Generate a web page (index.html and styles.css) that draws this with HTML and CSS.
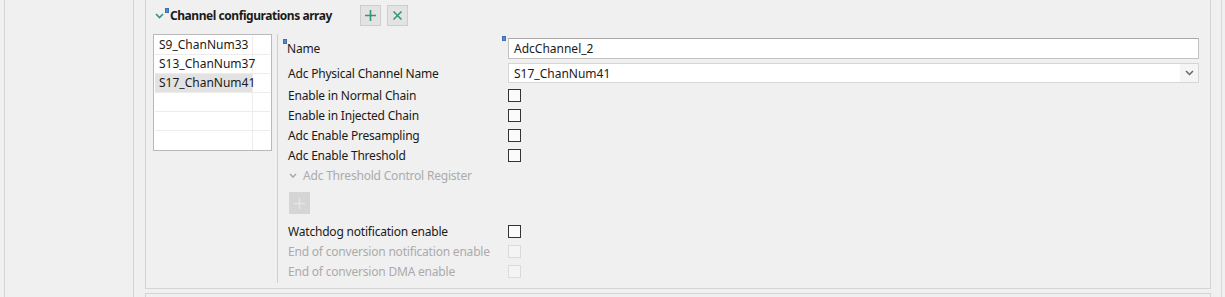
FILE: index.html
```html
<!DOCTYPE html>
<html>
<head>
  <title>Channel configurations</title>
  <link rel="stylesheet" href="styles.css">
</head>
<body>
  <div class="page">
    <!-- left tree area (empty here) -->
    <div class="sidebar"></div>

    <div class="main">
      <div class="panel">
        <!-- section header -->
        <div class="panel-head">
          <span class="twisty"><svg width="9" height="6" viewBox="0 0 9 6"><path d="M1 1 L4.5 4.5 L8 1" fill="none" stroke="#3d8f73" stroke-width="1.6"/></svg></span>
          <span class="mark mark-head"></span>
          <span class="title">Channel configurations array</span>
          <div class="tools">
            <button class="tool"><svg width="13" height="13" viewBox="0 0 13 13"><path d="M6.5 1 V12 M1 6.5 H12" stroke="#2f9a6b" stroke-width="1.6"/></svg></button>
            <button class="tool"><svg width="11" height="11" viewBox="0 0 11 11"><path d="M1.5 1.5 L9.5 9.5 M9.5 1.5 L1.5 9.5" stroke="#2f9a6b" stroke-width="1.6"/></svg></button>
          </div>
        </div>

        <div class="panel-body">
          <!-- list of channels -->
          <div class="list">
            <div class="list-row"><span class="cell">S9_ChanNum33</span><span class="cell-end"></span></div>
            <div class="list-row"><span class="cell">S13_ChanNum37</span><span class="cell-end"></span></div>
            <div class="list-row"><span class="cell selected">S17_ChanNum41</span><span class="cell-end"></span></div>
            <div class="list-row"><span class="cell"></span><span class="cell-end"></span></div>
            <div class="list-row"><span class="cell"></span><span class="cell-end"></span></div>
            <div class="list-row"><span class="cell"></span><span class="cell-end"></span></div>
          </div>

          <!-- properties of the selected channel -->
          <div class="form">
            <div class="row row-tall">
              <div class="label"><span class="mark"></span>Name</div>
              <div class="value"><span class="mark mark-input"></span><div class="field">AdcChannel_2</div></div>
            </div>
            <div class="row row-select">
              <div class="label">Adc Physical Channel Name</div>
              <div class="value">
                <div class="field select">S17_ChanNum41
                  <span class="drop"><svg width="9" height="6" viewBox="0 0 9 6"><path d="M1 1 L4.5 4.5 L8 1" fill="none" stroke="#666" stroke-width="1.5"/></svg></span>
                </div>
              </div>
            </div>
            <div class="row">
              <div class="label">Enable in Normal Chain</div>
              <div class="value"><span class="check"></span></div>
            </div>
            <div class="row">
              <div class="label">Enable in Injected Chain</div>
              <div class="value"><span class="check"></span></div>
            </div>
            <div class="row">
              <div class="label">Adc Enable Presampling</div>
              <div class="value"><span class="check"></span></div>
            </div>
            <div class="row">
              <div class="label">Adc Enable Threshold</div>
              <div class="value"><span class="check"></span></div>
            </div>
            <div class="row">
              <div class="label disabled sub"><svg width="8" height="5" viewBox="0 0 8 5"><path d="M1 1 L4 4 L7 1" fill="none" stroke="#a8a8a8" stroke-width="1.5"/></svg>Adc Threshold Control Register</div>
            </div>
            <div class="row-button">
              <button class="add-off"><svg width="13" height="13" viewBox="0 0 13 13"><path d="M6.5 1 V12 M1 6.5 H12" stroke="#e6e6e6" stroke-width="1.4"/></svg></button>
            </div>
            <div class="row">
              <div class="label">Watchdog notification enable</div>
              <div class="value"><span class="check"></span></div>
            </div>
            <div class="row">
              <div class="label disabled">End of conversion notification enable</div>
              <div class="value"><span class="check off"></span></div>
            </div>
            <div class="row">
              <div class="label disabled">End of conversion DMA enable</div>
              <div class="value"><span class="check off"></span></div>
            </div>
          </div>
        </div>
      </div>

      <div class="panel-next"></div>
    </div>

    <div class="rail"></div>
  </div>
</body>
</html>
```

FILE: styles.css
```css
* {
  box-sizing: border-box;
  margin: 0;
  padding: 0;
}

body {
  background-color: #f0f0f0;
  font-family: "Noto Sans", "Open Sans", sans-serif;
  font-size: 12px;
  color: #1a1a1a;
  overflow: hidden;
}

.page {
  display: flex;
  height: 297px;
}

/* left tree column */
.sidebar {
  margin-left: 4px;
  border-left: 1px solid #d4d4d4;
  border-right: 1px solid #d4d4d4;
  flex: none;
  width: 130px;
}

.main {
  width: 1066px;
  margin-left: 11px;
  flex: none;
}

.rail {
  width: 1px;
  margin-left: 10px;
  background-color: #d8d8d8;
}

/* the section box, its top is scrolled off */
.panel {
  border: 1px solid #d4d4d4;
  border-top: none;
  height: 289px;
  padding: 0 11px 0 7px;
}

.panel-next {
  margin-top: 4px;
  border-top: 1px solid #d4d4d4;
  border-left: 1px solid #d4d4d4;
  border-right: 1px solid #d4d4d4;
  height: 10px;
}

.panel-head {
  display: flex;
  align-items: center;
  height: 30px;
  margin-bottom: 4px;
  padding-left: 2px;
}

.twisty {
  display: flex;
  width: 10px;
  margin-top: 2px;
}

.mark {
  display: inline-block;
  width: 4px;
  height: 5px;
  background-color: #5b89c8;
  border: 1px solid #3f6fae;
  vertical-align: top;
}

.mark-head {
  align-self: flex-start;
  margin-top: 8px;
  margin-right: 1px;
}

.title {
  font-weight: bold;
  font-size: 12px;
  letter-spacing: -0.45px;
}

.tools {
  display: flex;
  gap: 6px;
  margin-left: 28px;
}

.tool {
  width: 21px;
  height: 21px;
  border: 1px solid #cdcdcd;
  background-color: #e3e3e3;
  display: flex;
  align-items: center;
  justify-content: center;
}

.panel-body {
  display: flex;
}

/* channel list */
.list {
  width: 119px;
  height: 117px;
  border: 1px solid #b9b9b9;
  background-color: white;
  padding: 1px 1px 0 1px;
  flex: none;
}

.list-row {
  display: flex;
  height: 19px;
  border-bottom: 1px solid #ececec;
}

.list-row:last-child {
  border-bottom: none;
}

.cell {
  width: 98px;
  padding-left: 4px;
  line-height: 18px;
  border-right: 1px solid #ececec;
}

.cell.selected {
  background-color: #e2e2e2;
}

.cell-end {
  flex: 1;
}

/* property form */
.form {
  margin-left: 5px;
  border-left: 1px solid #cfcfcf;
  padding: 2px 0 2px 5px;
  height: 249px;
  flex: 1;
}

.row {
  display: flex;
  align-items: center;
  height: 20px;
}

.row-tall {
  height: 25px;
}

.row-select {
  height: 24px;
}

.label {
  width: 225px;
  padding-left: 5px;
  flex: none;
  white-space: nowrap;
  letter-spacing: -0.2px;
}

.label .mark {
  margin-left: -5px;
  margin-top: -1px;
}

.label.disabled {
  color: #ababab;
}

.label.sub {
  display: flex;
  align-items: center;
  gap: 6px;
  padding-left: 6px;
}

.value {
  flex: 1;
  display: flex;
  align-items: center;
  position: relative;
}

.mark-input {
  position: absolute;
  left: -6px;
  top: -2px;
}

.field {
  flex: 1;
  height: 21px;
  border: 1px solid #c2c2c2;
  border-top-color: #a9a9a9;
  background-color: white;
  padding-left: 5px;
  line-height: 19px;
}

.select {
  height: 20px;
  border-color: #d6d6d6;
  display: flex;
  justify-content: space-between;
}

.drop {
  width: 18px;
  display: flex;
  align-items: center;
  justify-content: center;
  background-color: #f5f5f5;
}

.check {
  width: 13px;
  height: 13px;
  border: 1px solid #333;
  background-color: #fbfbfb;
}

.check.off {
  border-color: #dadada;
  background-color: #f4f4f4;
}

.row-button {
  height: 36px;
  padding: 7px 0 0 6px;
}

.add-off {
  width: 21px;
  height: 22px;
  border: none;
  background-color: #d5d5d5;
  display: flex;
  align-items: center;
  justify-content: center;
}
```
